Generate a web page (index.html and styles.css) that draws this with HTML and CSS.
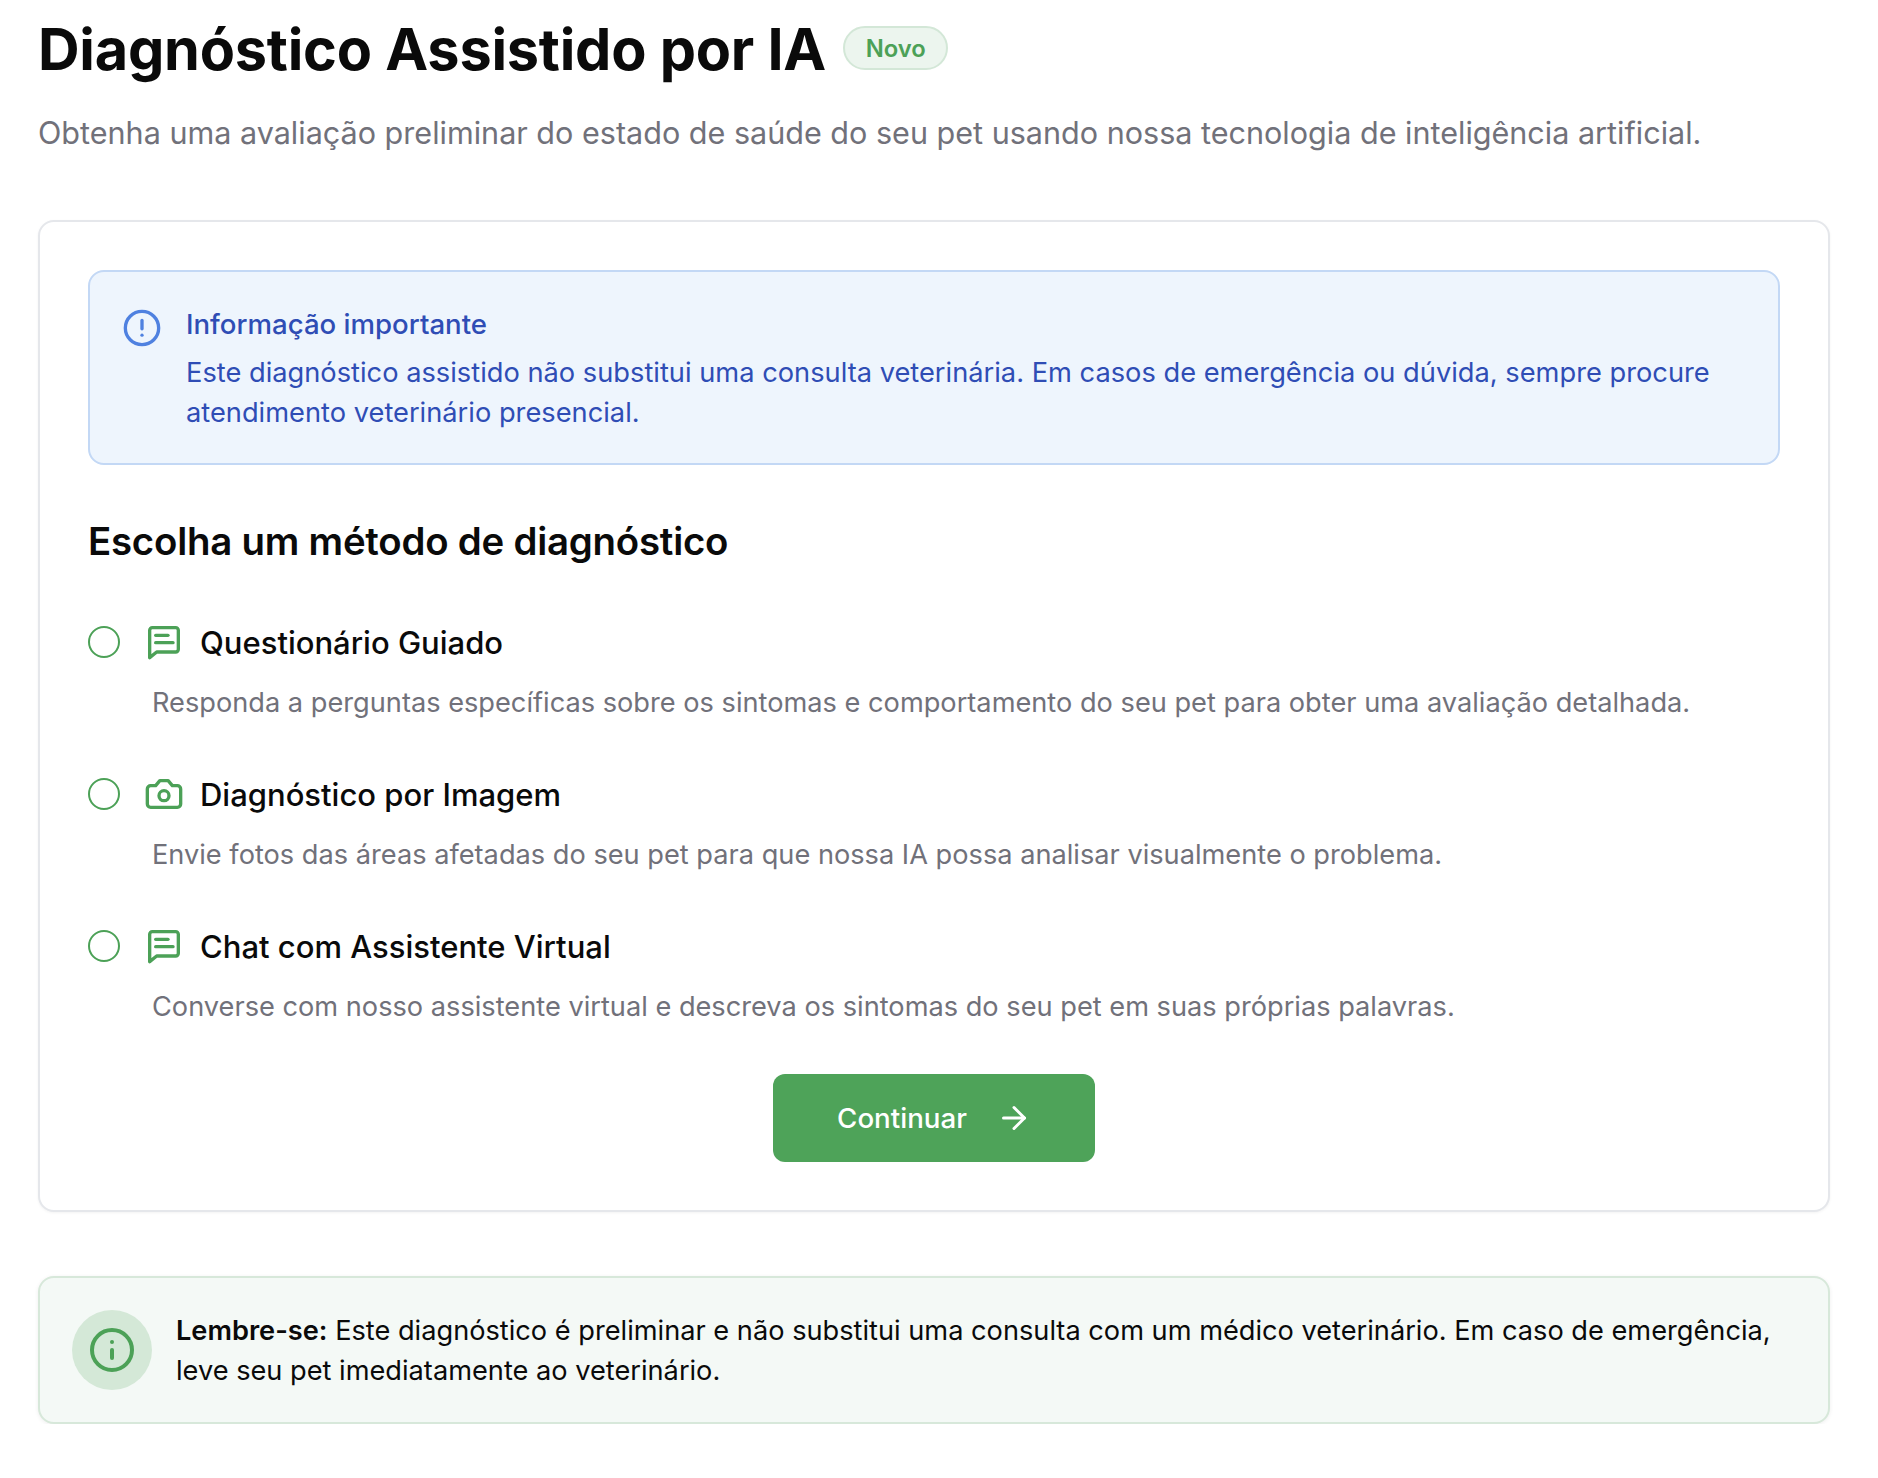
FILE: index.html
```html
<!DOCTYPE html>
<html lang="pt">
<head>
<meta charset="utf-8">
<title>Diagnóstico Assistido por IA</title>
<link rel="stylesheet" href="styles.css">
</head>
<body>
<main class="page">
  <header class="head">
    <div class="title-row">
      <h1 class="title">Diagnóstico Assistido por IA</h1>
      <span class="badge">Novo</span>
    </div>
    <p class="subtitle">Obtenha uma avaliação preliminar do estado de saúde do seu pet usando nossa tecnologia de inteligência artificial.</p>
  </header>

  <section class="card">
    <div class="alert">
      <svg class="alert-icon" viewBox="0 0 24 24" fill="none" stroke="currentColor" stroke-width="2" stroke-linecap="round" stroke-linejoin="round"><circle cx="12" cy="12" r="10"/><path d="M12 7.5v5"/><path d="M12 16.3h.01"/></svg>
      <div>
        <div class="alert-title">Informação importante</div>
        <p class="alert-text">Este diagnóstico assistido não substitui uma consulta veterinária. Em casos de emergência ou dúvida, sempre procure atendimento veterinário presencial.</p>
      </div>
    </div>

    <h2 class="section-title">Escolha um método de diagnóstico</h2>

    <div class="options">
      <div class="option">
        <div class="option-head">
          <span class="radio"></span>
          <svg class="option-icon" viewBox="0 0 24 24" fill="none" stroke="currentColor" stroke-width="2" stroke-linecap="round" stroke-linejoin="round"><path d="M5 3.4h14a1.6 1.6 0 0 1 1.6 1.6v11.4a1.6 1.6 0 0 1-1.6 1.6H7.6l-4.2 3.4V5A1.6 1.6 0 0 1 5 3.4z"/><path d="M7 8h7.4"/><path d="M7 12.4h10.4"/></svg>
          <span class="option-title">Questionário Guiado</span>
        </div>
        <p class="option-desc">Responda a perguntas específicas sobre os sintomas e comportamento do seu pet para obter uma avaliação detalhada.</p>
      </div>
      <div class="option">
        <div class="option-head">
          <span class="radio"></span>
          <svg class="option-icon" viewBox="0 0 24 24" fill="none" stroke="currentColor" stroke-width="2" stroke-linecap="round" stroke-linejoin="round"><path d="M14.5 4h-5L7 7H4a2 2 0 0 0-2 2v9a2 2 0 0 0 2 2h16a2 2 0 0 0 2-2V9a2 2 0 0 0-2-2h-3l-2.5-3z"/><circle cx="12" cy="13" r="3"/></svg>
          <span class="option-title">Diagnóstico por Imagem</span>
        </div>
        <p class="option-desc">Envie fotos das áreas afetadas do seu pet para que nossa IA possa analisar visualmente o problema.</p>
      </div>
      <div class="option">
        <div class="option-head">
          <span class="radio"></span>
          <svg class="option-icon" viewBox="0 0 24 24" fill="none" stroke="currentColor" stroke-width="2" stroke-linecap="round" stroke-linejoin="round"><path d="M5 3.4h14a1.6 1.6 0 0 1 1.6 1.6v11.4a1.6 1.6 0 0 1-1.6 1.6H7.6l-4.2 3.4V5A1.6 1.6 0 0 1 5 3.4z"/><path d="M7 8h7.4"/><path d="M7 12.4h10.4"/></svg>
          <span class="option-title">Chat com Assistente Virtual</span>
        </div>
        <p class="option-desc">Converse com nosso assistente virtual e descreva os sintomas do seu pet em suas próprias palavras.</p>
      </div>
    </div>

    <div class="actions">
      <button class="button" type="button">
        <span>Continuar</span>
        <svg class="button-icon" viewBox="0 0 24 24" fill="none" stroke="currentColor" stroke-width="2" stroke-linecap="round" stroke-linejoin="round"><path d="M5 12h14"/><path d="m12 5 7 7-7 7"/></svg>
      </button>
    </div>
  </section>

  <aside class="note">
    <span class="note-badge">
      <svg class="note-icon" viewBox="0 0 24 24" fill="none" stroke="currentColor" stroke-width="2" stroke-linecap="round" stroke-linejoin="round"><circle cx="12" cy="12" r="10"/><path d="M12 16v-4"/><path d="M12 8h.01"/></svg>
    </span>
    <p class="note-text"><strong class="note-strong">Lembre-se:</strong> Este diagnóstico é preliminar e não substitui uma consulta com um médico veterinário. Em caso de emergência, leve seu pet imediatamente ao veterinário.</p>
  </aside>
</main>
</body>
</html>
```

FILE: styles.css
```css
* { box-sizing: border-box; }
html, body { margin: 0; padding: 0; background: #fff; }
body { font-family: Inter, "Liberation Sans", sans-serif; color: #0a0a0a; }
.page { padding: 19px 48px 0 38px; }
.title-row { display: flex; align-items: center; gap: 17px; height: 60px; }
.title { margin: 0; font-size: 57.6px; line-height: 60px; font-weight: 700; letter-spacing: -0.004em; }
.badge {
  display: flex; align-items: center; justify-content: center;
  height: 44px; padding: 0 20.5px; margin-top: -2px;
  border: 2px solid #d3e7d7; border-radius: 22px;
  background: #ecf5ee; color: #4ca157;
  font-size: 23.8px; font-weight: 600;
}
.subtitle { margin: 34px 0 0; font-size: 30.55px; line-height: 40px; color: #71717a; }
.card {
  margin-top: 67px; height: 992px; padding: 48px;
  border: 2px solid #e5e7eb; border-radius: 16px;
  background: #fff; box-shadow: 0 1px 3px rgba(0,0,0,.05);
}
.alert {
  display: flex; gap: 24px; height: 195px; padding: 32px 32px;
  border: 2px solid #c3d8f5; border-radius: 16px;
  background: #eef5fd; color: #2f4db5;
}
.alert-icon { flex: none; width: 40px; height: 40px; margin-top: 4px; color: #4f81e0; }
.alert-title { font-size: 27.6px; line-height: 40px; font-weight: 500; }
.alert-text { margin: 9px 0 0; font-size: 27.26px; line-height: 40px; }
.section-title { margin: 52px 0 0; font-size: 38.4px; line-height: 48px; font-weight: 600; letter-spacing: -0.006em; }
.options { margin-top: 58px; display: flex; flex-direction: column; gap: 32px; }
.option { height: 120px; }
.option-head { display: flex; align-items: center; height: 40px; }
.radio { flex: none; width: 32px; height: 32px; margin-top: -2px; border: 2px solid #4ca157; border-radius: 50%; }
.option-icon { flex: none; width: 40px; height: 40px; margin: -2px 16px 0 24px; color: #4ca157; }
.option-title { font-size: 31px; line-height: 40px; font-weight: 500; }
.option-desc { margin: 20px 0 0 64px; font-size: 27.2px; line-height: 40px; color: #71717a; }
.actions { display: flex; justify-content: center; margin-top: 27px; }
.button {
  display: flex; align-items: center; gap: 29px;
  height: 88px; padding: 0 63px 0 64px;
  border: 0; border-radius: 12px;
  background: #4ea359; color: #fff;
  font: 500 27.7px/40px Inter, "Liberation Sans", sans-serif;
}
.button-icon { flex: none; width: 36px; height: 36px; }
.note {
  display: flex; align-items: center; gap: 24px;
  margin-top: 64px; height: 148px; padding: 0 32px;
  border: 2px solid #d7e8da; border-radius: 16px;
  background: #f4f9f6; box-shadow: 0 1px 4px rgba(0,0,0,.07);
}
.note-badge { flex: none; display: flex; align-items: center; justify-content: center; width: 80px; height: 80px; border-radius: 50%; background: #d4e8d7; }
.note-icon { width: 48px; height: 48px; color: #4ca157; }
.note-text { margin: 2px 0 0; font-size: 27.2px; line-height: 40px; }
.note-strong { font-weight: 600; }
```
